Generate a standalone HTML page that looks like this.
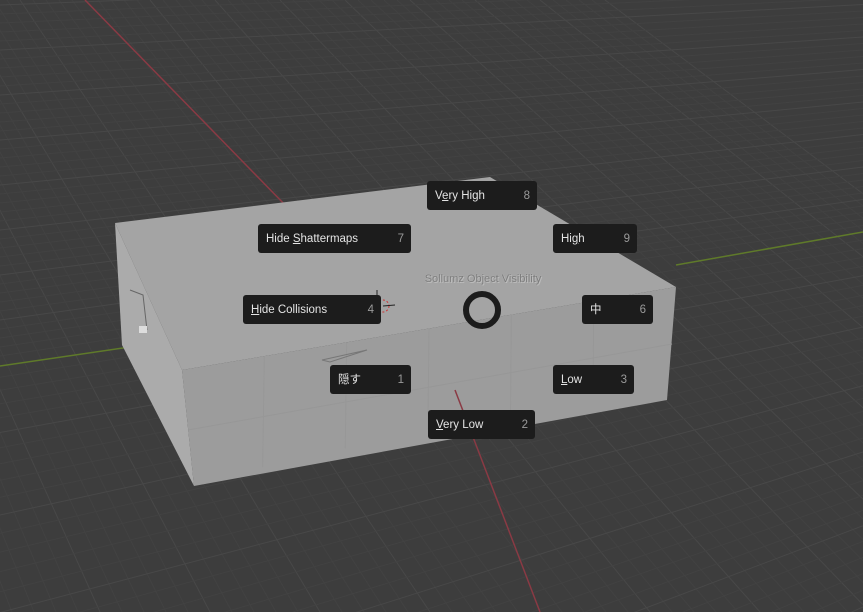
<!DOCTYPE html>
<html><head><meta charset="utf-8">
<style>
html,body{margin:0;padding:0;width:863px;height:612px;overflow:hidden;}
body{background:#3d3d3d;position:relative;font-family:"Liberation Sans","Noto Sans CJK JP",sans-serif;}
svg{position:absolute;left:0;top:0;display:block;}
.b{position:absolute;height:29px;background:#1c1c1c;border-radius:3px;color:#e4e4e4;font-size:11.5px;line-height:31px;box-sizing:border-box;padding-left:8px;}
.b span{position:absolute;right:7px;top:0;color:#9a9a9a;}
.t{position:absolute;left:383px;top:273px;width:200px;text-align:center;font-size:11px;color:#7c7c7c;text-shadow:1px 1px 0 #bdbdbd,0 0 1px #c0c0c0;}
.ring{position:absolute;left:463px;top:291px;width:38px;height:38px;border:6px solid #1c1c1c;border-radius:50%;box-sizing:border-box;}
</style></head><body>
<svg width="863" height="612" id="s">
<g id="grid" stroke="#424242" stroke-width="1"></g>
<line x1="85" y1="0" x2="290" y2="210" stroke="#8a3a44" stroke-width="1.5"/>
<line x1="0" y1="366" x2="150" y2="344" stroke="#5f7a2a" stroke-width="1.5"/>
<line x1="676" y1="265" x2="863" y2="232" stroke="#5f7a2a" stroke-width="1.5"/>
<polygon points="115,223 182,370 194,486 122,345" fill="#ababab"/>
<polygon points="182,370 676,287 667,400 194,486" fill="#9c9c9c"/>
<polygon points="115,223 490,177 676,287 182,370" fill="#a4a4a4"/>
<g stroke="#979797" stroke-width="1" id="fg"></g>
<line x1="455" y1="390" x2="540" y2="612" stroke="#8a3a44" stroke-width="1.5"/>
<polygon points="322,360 367,350 330,362" fill="none" stroke="#777" stroke-width="1"/>
<path d="M130,290 L143,295 L147,330" stroke="#666" fill="none"/>
<rect x="139" y="326" width="8" height="7" fill="#ddd"/>
<circle cx="383" cy="306" r="6" fill="none" stroke="#c33" stroke-dasharray="2 2"/>
<line x1="377" y1="290" x2="377" y2="324" stroke="#222"/>
<line x1="383" y1="306" x2="395" y2="305" stroke="#222"/>
</svg>
<div class="t">Sollumz Object Visibility</div>
<div class="ring"></div>
<div class="b" style="left:427px;top:181px;width:110px">V<u>e</u>ry High<span>8</span></div>
<div class="b" style="left:258px;top:224px;width:153px">Hide <u>S</u>hattermaps<span>7</span></div>
<div class="b" style="left:553px;top:224px;width:84px">Hi<u>g</u>h<span>9</span></div>
<div class="b" style="left:243px;top:295px;width:138px"><u>H</u>ide Collisions<span>4</span></div>
<div class="b" style="left:582px;top:295px;width:71px">中<span>6</span></div>
<div class="b" style="left:330px;top:365px;width:81px">隠す<span>1</span></div>
<div class="b" style="left:553px;top:365px;width:81px"><u>L</u>ow<span>3</span></div>
<div class="b" style="left:428px;top:410px;width:107px"><u>V</u>ery Low<span>2</span></div>
<script>
var g=document.getElementById('grid'),ns='http://www.w3.org/2000/svg';
function L(x1,y1,x2,y2,p,c,w){var l=document.createElementNS(ns,'line');l.setAttribute('x1',x1);l.setAttribute('y1',y1);l.setAttribute('x2',x2);l.setAttribute('y2',y2);if(c)l.setAttribute('stroke',c);if(w)l.setAttribute('stroke-width',w);p.appendChild(l);}
for(var k=-40;k<=40;k++){if(k==0)continue;var c=(k%5==0)?'#484848':'#424242';L(85+k*13,0,540+k*22,612,g,c);}
for(var k=-40;k<=40;k++){if(k==0)continue;var c=(k%5==0)?'#484848':'#424242';var yl=365+k*(k>0?12+k*0.3:9),yr=232+k*(k>0?8+k*0.15:6.5);L(0,yl,863,yr,g,c);}
var f=document.getElementById('fg');
for(var i=1;i<6;i++){var y1=370-83*i/6,x1=182+494*i/6;L(x1,y1,x1-2+i*0.3,y1+116-30*i/6,f);}
L(188,430,672,344,f);
</script>
</body></html>
